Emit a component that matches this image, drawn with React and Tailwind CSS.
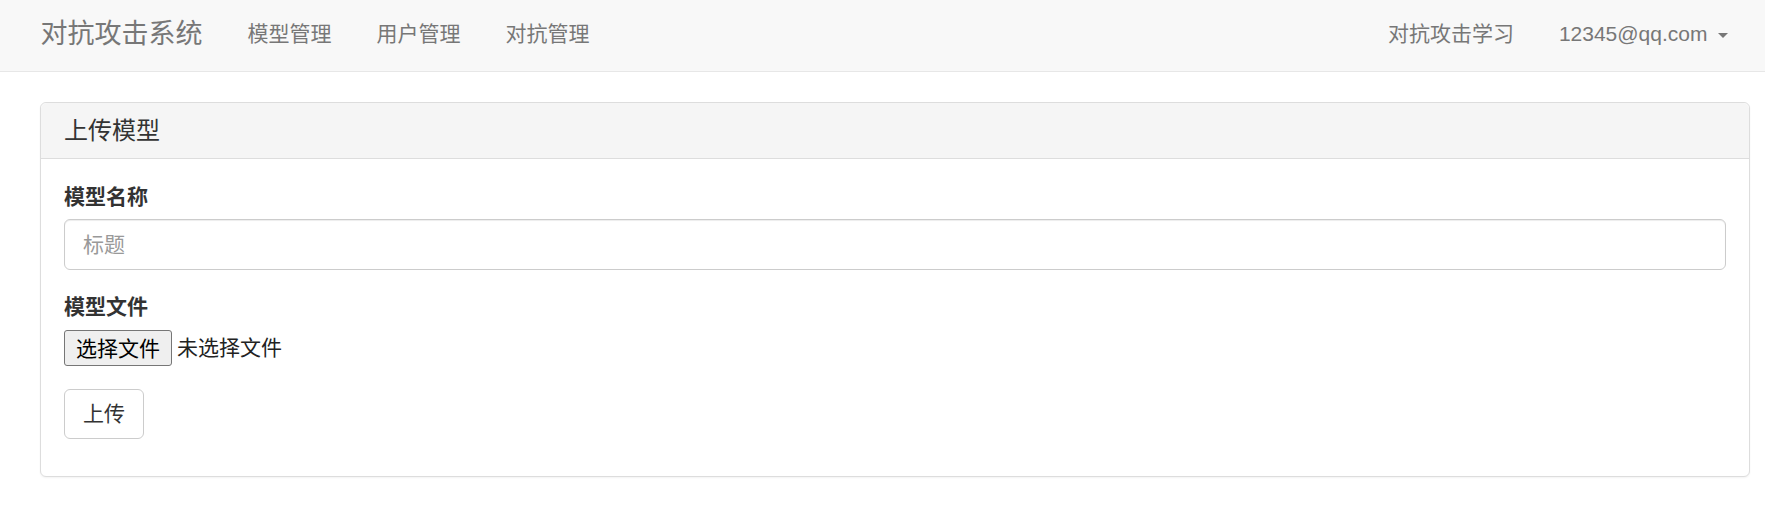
import React from 'react';

const font = { fontFamily: '"Liberation Sans", "Noto Sans CJK SC", sans-serif' };

export default function App() {
  return (
    <div className="min-h-screen bg-white text-[#333]" style={font}>
      {/* Navbar */}
      <nav className="h-[72px] pb-[3px] bg-[#f8f8f8] border-b border-[#e7e7e7] flex items-center justify-between pl-[18px] pr-[15px]">
        <div className="flex items-center">
          <a className="px-[22.5px] text-[27px] leading-[30px] text-[#777]">对抗攻击系统</a>
          <a className="px-[22.5px] text-[21px] leading-[30px] text-[#777]">模型管理</a>
          <a className="px-[22.5px] text-[21px] leading-[30px] text-[#777]">用户管理</a>
          <a className="px-[22.5px] text-[21px] leading-[30px] text-[#777]">对抗管理</a>
        </div>
        <div className="flex items-center">
          <a className="px-[22.5px] text-[21px] leading-[30px] text-[#777]">对抗攻击学习</a>
          <a className="px-[22.5px] text-[21px] leading-[30px] text-[#777] flex items-center">
            12345@qq.com
            <span className="ml-[10px] mt-[2px] w-0 h-0 border-x-[5px] border-x-transparent border-t-[5px] border-t-[#777]" />
          </a>
        </div>
      </nav>

      {/* Panel */}
      <div className="pl-[40px] pr-[15px] mt-[30px]">
        <div className="border border-[#ddd] rounded-[6px] shadow-[0_1px_2px_rgba(0,0,0,0.05)] bg-white">
          <div className="bg-[#f5f5f5] border-b border-[#ddd] rounded-t-[6px] px-[23px] h-[56px] flex items-center">
            <h3 className="text-[24px] leading-[26px] text-[#333]">上传模型</h3>
          </div>
          <div className="px-[23px] pt-[22.5px] pb-[37px]">
            <label className="block text-[21px] leading-[30px] font-bold text-[#333] mb-[7.5px]">模型名称</label>
            <input
              type="text"
              placeholder="标题"
              className="block w-full h-[51px] px-[18px] text-[21px] text-[#555] border border-[#ccc] rounded-[6px] shadow-[inset_0_1px_1px_rgba(0,0,0,0.075)] placeholder:text-[#999] outline-none"
              style={font}
            />
            <label className="block mt-[22px] text-[21px] leading-[30px] font-bold text-[#333]">模型文件</label>
            <div className="flex items-center mt-[8px] h-[36px]">
              <button
                className="h-[36px] px-[11px] bg-[#efefef] border border-[#767676] rounded-[3px] text-[21px] leading-none text-black"
                style={font}
              >
                选择文件
              </button>
              <span className="ml-[5px] text-[21px] text-[#222]">未选择文件</span>
            </div>
            <button
              className="mt-[23px] h-[50px] px-[18px] bg-white border border-[#ccc] rounded-[6px] text-[21px] text-[#333]"
              style={font}
            >
              上传
            </button>
          </div>
        </div>
      </div>
    </div>
  );
}
